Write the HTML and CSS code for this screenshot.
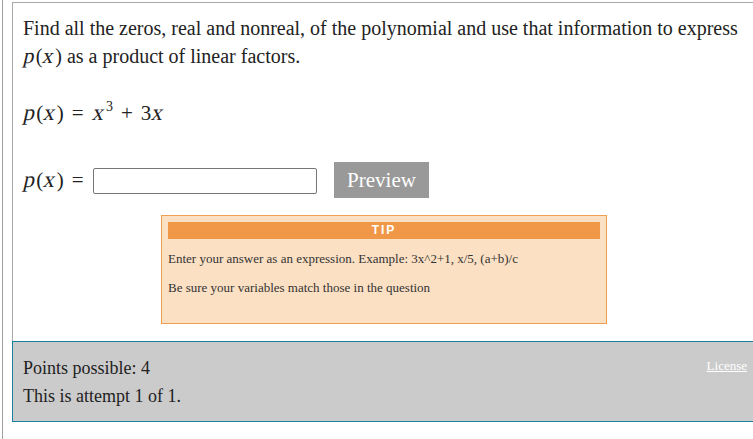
FILE: index.html
```html
<!DOCTYPE html>
<html>
<head>
<meta charset="utf-8">
<link rel="stylesheet" href="styles.css">
</head>
<body>
<div class="page">
  <div class="question">
    <div class="content">
      <p class="prompt">Find all the zeros, real and nonreal, of the polynomial and use that information to express <span class="mj"><span class="v">p</span>(<span class="v">x</span>)</span> as a product of linear factors.</p>
      <p class="formula mj"><span class="v">p</span>(<span class="v">x</span>)<span class="op">=</span><span class="v">x</span><sup>3</sup><span class="op">+</span>3<span class="v">x</span></p>
      <div class="answer-row">
        <span class="mj label"><span class="v">p</span>(<span class="v">x</span>)<span class="op">=</span></span>
        <input class="answer" type="text">
        <button class="preview">Preview</button>
      </div>
      <div class="tip">
        <div class="tip-head">TIP</div>
        <p>Enter your answer as an expression. Example: 3x^2+1, x/5, (a+b)/c</p>
        <p>Be sure your variables match those in the question</p>
      </div>
    </div>
    <div class="footer">
      <div class="footer-text">
        <p>Points possible: 4</p>
        <p>This is attempt 1 of 1.</p>
      </div>
      <a class="license" href="#">License</a>
    </div>
  </div>
</div>
</body>
</html>
```

FILE: styles.css
```css
html, body {
  margin: 0;
  padding: 0;
  background: #fff;
  overflow: hidden;
}
body {
  font-family: "Liberation Serif", serif;
  color: #222;
  width: 753px;
  height: 439px;
}
.page {
  margin-left: 2px;
  border-left: 1px solid #a0a0a0;
  padding: 2px 0 0 9px;
  height: 437px;
}
.question {
  border-top: 1px solid #a8a8a8;
  border-left: 1px solid #a8a8a8;
}
.content {
  padding: 11px 0 17px 10px;
}
.prompt {
  margin: 0;
  font-size: 20px;
  line-height: 28px;
  color: #222;
}
.v {
  display: inline-block;
  font-style: normal;
  font-size: 1.08em;
  line-height: 1;
  transform: skewX(-13deg);
  padding: 0 1px;
}
.mj .op {
  margin: 0 8px;
}
.formula {
  margin: 29px 0 0 0;
  font-size: 21px;
  line-height: 28px;
}
.formula sup {
  font-size: 14px;
  vertical-align: 9px;
  line-height: 0;
  margin-left: 1px;
}
.answer-row {
  margin-top: 35px;
  display: flex;
  align-items: center;
  height: 36px;
}
.label {
  font-size: 21px;
  width: 70px;
}
.answer {
  box-sizing: border-box;
  width: 224px;
  height: 26px;
  border: 1px solid #767676;
  border-radius: 2px;
  margin: 2px 0 0 0;
  padding: 0;
}
.preview {
  margin-left: 17px;
  height: 36px;
  width: 95px;
  background: #999;
  border: none;
  color: #fff;
  font-family: "Liberation Serif", serif;
  font-size: 21px;
  padding: 0;
}
.tip {
  margin: 17px 0 0 138px;
  width: 432px;
  height: 95px;
  border: 1px solid #f0a050;
  background: #fbe0c4;
  padding: 6px;
}
.tip-head {
  background: #f09848;
  color: #fff;
  font-family: "Liberation Sans", Arial, sans-serif;
  font-weight: bold;
  font-size: 12px;
  letter-spacing: 2px;
  text-align: center;
  height: 17px;
  line-height: 17px;
}
.tip p {
  margin: 11px 0 0 0;
  font-size: 13px;
  line-height: 18px;
  color: #333;
}
.footer {
  background: #cbcbcb;
  border-top: 1px solid #1b7fa3;
  border-bottom: 1px solid #1b7fa3;
  border-left: 1px solid #1b7fa3;
  margin-left: -1px;
  height: 79px;
  padding: 0 6px 0 10px;
  display: flex;
  justify-content: space-between;
  align-items: flex-start;
}
.footer-text p {
  margin: 0;
  font-size: 18px;
  line-height: 28px;
  color: #222;
}
.footer-text {
  padding-top: 12px;
}
.license {
  color: #fff;
  font-size: 13px;
  margin-top: 16px;
}
```
